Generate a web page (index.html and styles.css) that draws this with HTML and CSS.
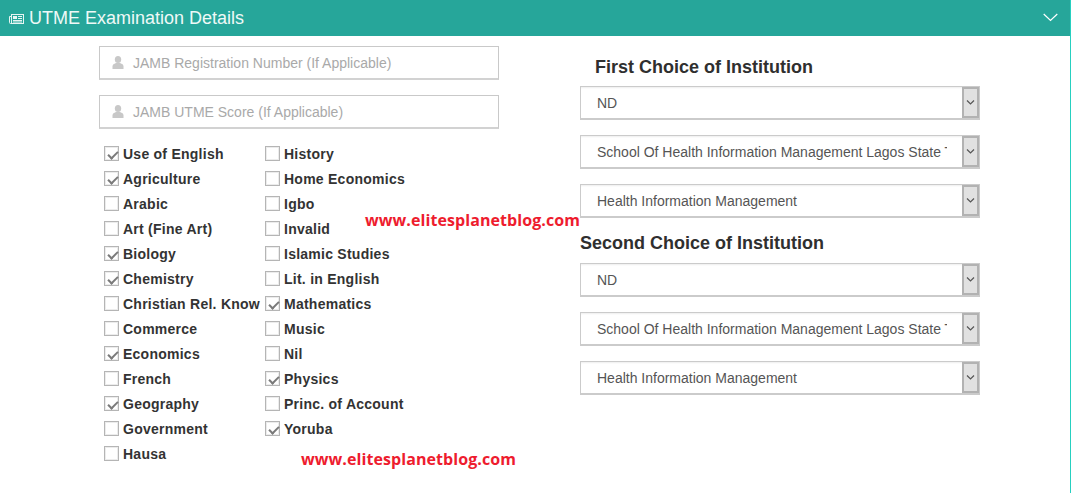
FILE: index.html
```html
<!DOCTYPE html>
<html lang="en">
<head>
<meta charset="utf-8">
<title>UTME Examination Details</title>
<link rel="stylesheet" href="styles.css">
</head>
<body>
<div class="panel">
  <header class="panel-head">
    <h2 class="panel-title">
      <svg class="news-icon" width="15" height="10" viewBox="0 0 15 10" fill="none" stroke="#e6f5f3" stroke-width="1"><rect x="2.5" y="0.5" width="12" height="9"/><path d="M2.5 2.5H0.5V8.5Q0.5 9.5 1.5 9.5H3"/><rect x="4" y="2" width="4" height="3" fill="#e6f5f3" stroke="none"/><path d="M9 2.5H13M9 4.5H13M4 6.500H13M4 8H13"/></svg>
      UTME Examination Details
    </h2>
    <svg class="head-chevron" width="15" height="9" viewBox="0 0 15 9" fill="none" stroke="#fff" stroke-width="1.2"><path d="M0.7 1L7.500 7.500L14.300 1"/></svg>
  </header>
  <div class="panel-body">
    <section class="left-col">
      <div class="field"><svg class="user-icon" width="12" height="13" viewBox="0 0 12 13" fill="#c8c8c8"><ellipse cx="6" cy="3.500" rx="3.200" ry="3.500"/><path d="M0.500 13V10Q0.500 8 3 7.500L4 7H8L9 7.500Q11.500 8 11.500 10V13Z"/></svg><span>JAMB Registration Number (If Applicable)</span></div>
      <div class="field"><svg class="user-icon" width="12" height="13" viewBox="0 0 12 13" fill="#c8c8c8"><ellipse cx="6" cy="3.500" rx="3.200" ry="3.500"/><path d="M0.500 13V10Q0.500 8 3 7.500L4 7H8L9 7.500Q11.500 8 11.500 10V13Z"/></svg><span>JAMB UTME Score (If Applicable)</span></div>
      <div class="subjects">
        <label class="subject"><input type="checkbox" checked>Use of English</label>
        <label class="subject"><input type="checkbox">History</label>
        <label class="subject"><input type="checkbox" checked>Agriculture</label>
        <label class="subject"><input type="checkbox">Home Economics</label>
        <label class="subject"><input type="checkbox">Arabic</label>
        <label class="subject"><input type="checkbox">Igbo</label>
        <label class="subject"><input type="checkbox">Art (Fine Art)</label>
        <label class="subject"><input type="checkbox">Invalid</label>
        <label class="subject"><input type="checkbox" checked>Biology</label>
        <label class="subject"><input type="checkbox">Islamic Studies</label>
        <label class="subject"><input type="checkbox" checked>Chemistry</label>
        <label class="subject"><input type="checkbox">Lit. in English</label>
        <label class="subject"><input type="checkbox">Christian Rel. Know</label>
        <label class="subject"><input type="checkbox" checked>Mathematics</label>
        <label class="subject"><input type="checkbox">Commerce</label>
        <label class="subject"><input type="checkbox">Music</label>
        <label class="subject"><input type="checkbox" checked>Economics</label>
        <label class="subject"><input type="checkbox">Nil</label>
        <label class="subject"><input type="checkbox">French</label>
        <label class="subject"><input type="checkbox" checked>Physics</label>
        <label class="subject"><input type="checkbox" checked>Geography</label>
        <label class="subject"><input type="checkbox">Princ. of Account</label>
        <label class="subject"><input type="checkbox">Government</label>
        <label class="subject"><input type="checkbox" checked>Yoruba</label>
        <label class="subject"><input type="checkbox">Hausa</label>
      </div>
    </section>
    <section class="right-col">
      <h3 class="choice-title first">First Choice of Institution</h3>
      <div class="select"><span class="select-text">ND</span><span class="select-btn"><svg width="9" height="5" viewBox="0 0 9 5" fill="none" stroke="#555" stroke-width="1.2"><path d="M1 0.500L4.500 4L8 0.500"/></svg></span></div>
      <div class="select"><span class="select-text">School Of Health Information Management Lagos State Teaching</span><span class="select-btn"><svg width="9" height="5" viewBox="0 0 9 5" fill="none" stroke="#555" stroke-width="1.2"><path d="M1 0.500L4.500 4L8 0.500"/></svg></span></div>
      <div class="select"><span class="select-text">Health Information Management</span><span class="select-btn"><svg width="9" height="5" viewBox="0 0 9 5" fill="none" stroke="#555" stroke-width="1.2"><path d="M1 0.500L4.500 4L8 0.500"/></svg></span></div>
      <h3 class="choice-title second">Second Choice of Institution</h3>
      <div class="select"><span class="select-text">ND</span><span class="select-btn"><svg width="9" height="5" viewBox="0 0 9 5" fill="none" stroke="#555" stroke-width="1.2"><path d="M1 0.500L4.500 4L8 0.500"/></svg></span></div>
      <div class="select"><span class="select-text">School Of Health Information Management Lagos State Teaching</span><span class="select-btn"><svg width="9" height="5" viewBox="0 0 9 5" fill="none" stroke="#555" stroke-width="1.2"><path d="M1 0.500L4.500 4L8 0.500"/></svg></span></div>
      <div class="select"><span class="select-text">Health Information Management</span><span class="select-btn"><svg width="9" height="5" viewBox="0 0 9 5" fill="none" stroke="#555" stroke-width="1.2"><path d="M1 0.500L4.500 4L8 0.500"/></svg></span></div>
    </section>
  </div>
</div>
<div class="watermark wm-one">www.elitesplanetblog.com</div>
<div class="watermark wm-two">www.elitesplanetblog.com</div>
</body>
</html>
```
FILE: styles.css
```css
* { box-sizing: border-box; }
html, body { height: 100%; }
body {
  margin: 0;
  position: relative;
  overflow: hidden;
  background: #fff;
  font-family: "Liberation Sans", Arial, sans-serif;
  color: #333;
}
.panel {
  height: 100%;
  border-right: 1px solid #26d0c0;
}
.panel-head {
  height: 36px;
  background: #26a69a;
  color: #eef9f7;
  display: flex;
  align-items: center;
  justify-content: space-between;
  padding: 0 12px 0 9px;
}
.panel-title {
  margin: 0;
  font-size: 18px;
  font-weight: 400;
  display: flex;
  align-items: center;
  gap: 5px;
}
.news-icon { margin-top: 2px; }
.head-chevron { margin-bottom: 2px; }
.panel-body {
  display: flex;
  padding: 10px 0 0 99px;
}
.left-col { width: 400px; }
.right-col { width: 400px; margin-left: 81px; }
.field {
  height: 34px;
  border: 1px solid #c9c9c9;
  border-bottom: 2px solid #d2d2d2;
  display: flex;
  align-items: center;
  padding-left: 12px;
  gap: 9px;
  margin-bottom: 15px;
  font-size: 14px;
  color: #a9a9a9;
}
.field + .field { margin-bottom: 0; }
.subjects {
  display: grid;
  grid-template-columns: 161px 1fr;
  grid-auto-rows: 25px;
  margin-top: 12px;
  padding-left: 5px;
}
.subject {
  display: flex;
  align-items: center;
  font-size: 14px;
  font-weight: 700;
  letter-spacing: 0.25px;
  color: #333;
  white-space: nowrap;
}
.subject input {
  appearance: none;
  margin: 0 4px 0 0;
  width: 15px;
  height: 15px;
  border: 1px solid #b5b5b5;
  box-shadow: inset 0 0 0 1px #ececec;
  background: #fff;
  position: relative;
}
.subject input:checked::after {
  content: "";
  position: absolute;
  left: 4.500px;
  top: 2px;
  width: 4px;
  height: 8px;
  border: solid #7a7a7a;
  border-width: 0 2px 2px 0;
  transform: rotate(45deg);
}
.choice-title {
  margin: 0;
  font-size: 18px;
  font-weight: 700;
  line-height: 20px;
  color: #2f2f2f;
}
.choice-title.first { padding-left: 15px; margin-top: 11px; margin-bottom: 9px; }
.choice-title.second { margin-top: 15px; margin-bottom: 10px; }
.select {
  height: 34px;
  border: 1px solid #cbcbcb;
  border-bottom-width: 2px;
  display: flex;
  align-items: stretch;
  font-size: 14px;
  color: #555;
  margin-bottom: 15px;
  box-shadow: inset 0 2px 2px -1px #eee;
}
.select:has(+ .choice-title) { margin-bottom: 0; }
.select-text {
  flex: 1;
  min-width: 0;
  margin: 0 15px 0 16px;
  line-height: 32px;
  white-space: nowrap;
  overflow: hidden;
}
.select-btn {
  width: 17px;
  background: #e1e1e1;
  border: 2px solid #b2b2b2;
  display: flex;
  align-items: center;
  justify-content: center;
}
.watermark {
  position: absolute;
  font-family: "Open Sans", sans-serif;
  font-weight: 700;
  font-size: 16px;
  letter-spacing: 0.08px;
  line-height: 20px;
  color: #ee1c2e;
  white-space: nowrap;
}
.wm-one { left: 365px; top: 210px; }
.wm-two { left: 301px; top: 449px; }
```
